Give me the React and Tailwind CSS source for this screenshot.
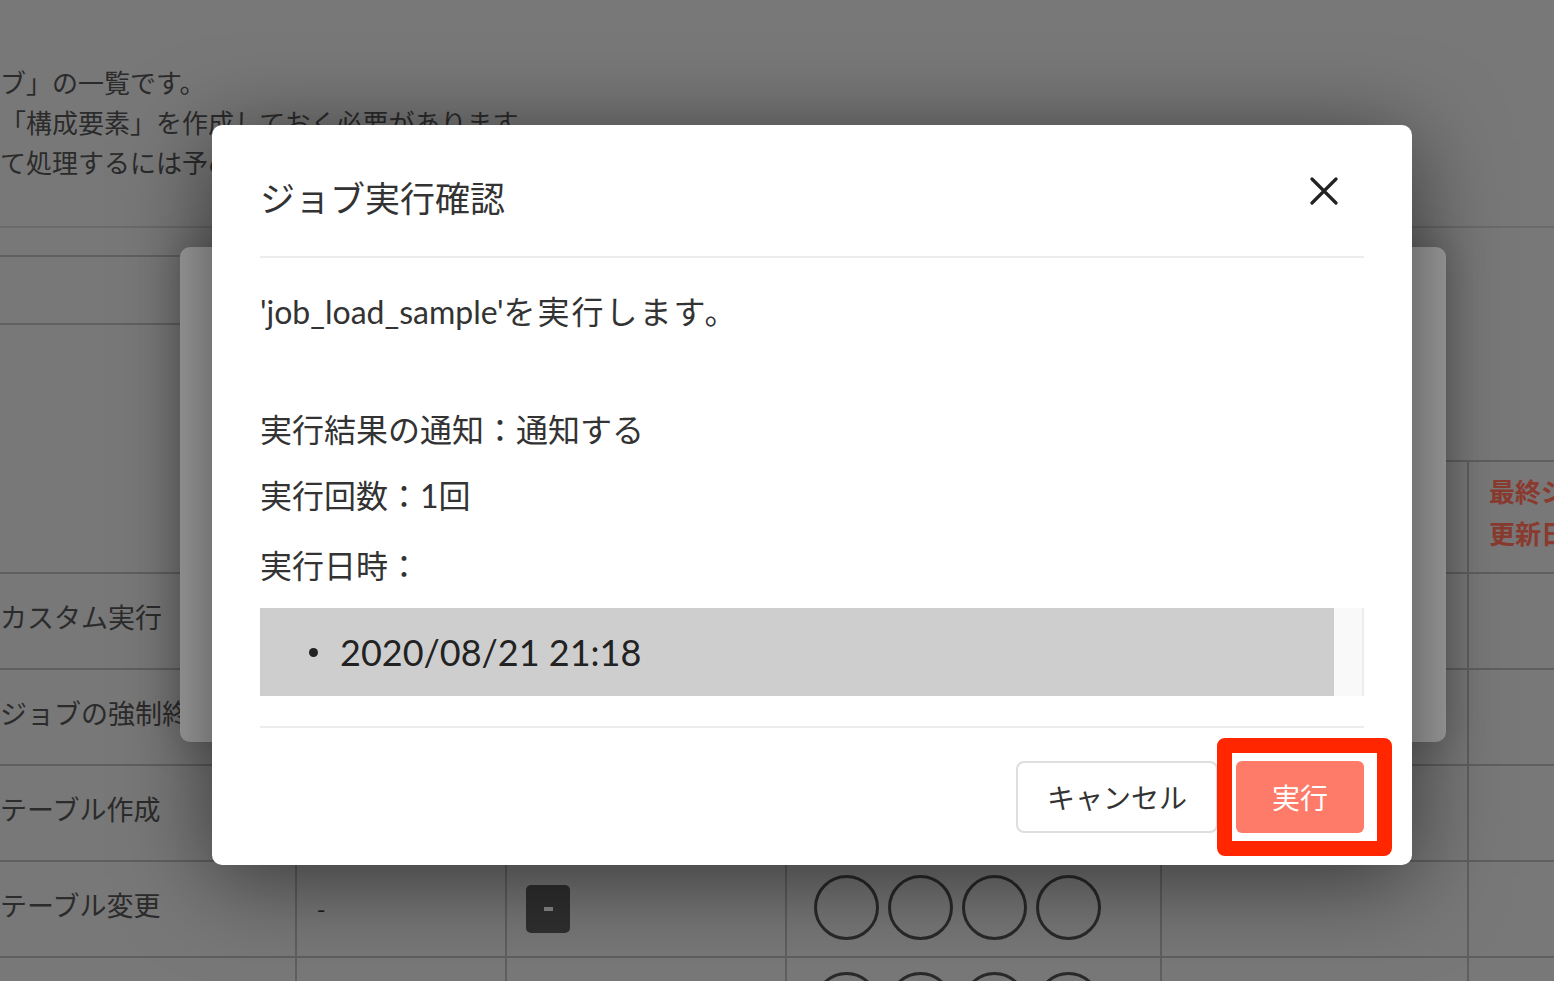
import React from "react";

const jp = { fontFamily: "'Noto Sans CJK JP', sans-serif" };
const mix = { fontFamily: "Lato, 'Noto Sans CJK JP', sans-serif" };

function Circles() {
  return (
    <div className="flex gap-[9px]">
      {[0, 1, 2, 3].map((i) => (
        <div key={i} className="w-[65px] h-[65px] rounded-full border-[3px] border-[#2a2a2a]" />
      ))}
    </div>
  );
}

function Row({ label, children, last }) {
  return (
    <div className="grid grid-cols-[295px_210px_280px_375px_307px_1fr] h-[96px] border-t-2 border-[#5f5f5f]">
      <div className="flex items-center pb-[7px] text-[27px] text-[#2b2b2b] whitespace-nowrap overflow-hidden">{label}</div>
      <div className="border-l-2 border-[#5f5f5f] flex items-center pl-[20px] pb-[3px]">{children && children[0]}</div>
      <div className="border-l-2 border-[#5f5f5f] flex items-center pl-[19px]">{children && children[1]}</div>
      <div className={"border-l-2 border-[#5f5f5f] flex pl-[27px] " + (last ? "items-start pt-[14px]" : "items-center pb-[3px]")}>
        {children && children[2]}
      </div>
      <div className="border-l-2 border-[#5f5f5f]" />
      <div className="border-l-2 border-[#5f5f5f]" />
    </div>
  );
}

export default function App() {
  return (
    <div className="relative w-[1554px] h-[981px] overflow-hidden bg-[#787878]" style={jp}>
      {/* page behind */}
      <div className="h-[226px] pt-[62px] text-[26px] leading-[40px] text-[#2b2b2b] whitespace-nowrap">
        <p>ブ」の一覧です。</p>
        <p>「構成要素」を作成しておく必要があります。</p>
        <p>て処理するには予め設定をしてください。</p>
      </div>
      <div className="h-[29px] border-t-2 border-[#6a6a6a]" />
      <div className="h-[68px] w-[400px] border-t-2 border-[#606060]" />
      <div className="h-[137px] w-[400px] border-t-2 border-[#606060]" />
      <div className="grid grid-cols-[295px_210px_280px_375px_307px_1fr] h-[112px]">
        <div />
        <div className="border-t-2 border-l-2 border-[#5f5f5f]" />
        <div className="border-t-2 border-l-2 border-[#5f5f5f]" />
        <div className="border-t-2 border-l-2 border-[#5f5f5f]" />
        <div className="border-t-2 border-l-2 border-[#5f5f5f]" />
        <div className="border-t-2 border-l-2 border-[#5f5f5f] flex flex-col justify-center pl-[20px] pb-[10px] text-[26px] leading-[42px] font-bold text-[#8a3a2f] whitespace-nowrap">
          <span>最終ジョブ</span>
          <span>更新日時</span>
        </div>
      </div>
      <Row label="カスタム実行" />
      <Row label="ジョブの強制終了" />
      <Row label="テーブル作成" />
      <Row label="テーブル変更">
        {[
          <span key="a" className="text-[24px] text-[#1e1e1e]">-</span>,
          <div key="b" className="w-[44px] h-[48px] rounded-[5px] bg-[#303030] flex items-center justify-center">
            <div className="w-[9px] h-[4px] bg-[#888]" />
          </div>,
          <Circles key="c" />,
        ]}
      </Row>
      <Row label="" last>
        {[null, null, <Circles key="c" />]}
      </Row>

      {/* previous dialog */}
      <div className="absolute left-[180px] top-[247px] w-[1266px] h-[495px] rounded-[10px] bg-[#a1a1a1] shadow-[0_0_40px_rgba(0,0,0,0.25)]" />

      {/* confirm dialog */}
      <div className="absolute left-[212px] top-[125px] w-[1200px] h-[740px] rounded-[10px] bg-white px-[48px] shadow-[0_14px_90px_rgba(0,0,0,0.55)] text-[#333]">
        <div className="flex justify-between items-start h-[133px] border-b-2 border-[#ececec]">
          <h2 className="mt-[49px] text-[35px] leading-[46px] text-[#333]">ジョブ実行確認</h2>
          <button className="mt-[52px] mr-[26px]">
            <svg width="28" height="28" viewBox="0 0 28 28">
              <path d="M2 2 L26 26 M26 2 L2 26" stroke="#222" strokeWidth="3.2" strokeLinecap="round" />
            </svg>
          </button>
        </div>
        <div className="pt-[30px] text-[32px] leading-[48px]">
          <p style={mix}>
            'job_load_sample'<span className="tracking-[2px]">を実行します。</span>
          </p>
          <div className="h-[68px]" />
          <p className="mb-[20px]">実行結果の通知：通知する</p>
          <p className="mb-[20px]" style={mix}>実行回数：1回</p>
          <p className="mb-[20px]">実行日時：</p>
          <div className="flex h-[88px]">
            <div className="flex-1 bg-[#cecece] flex items-center">
              <span className="ml-[49px] w-[9px] h-[9px] rounded-full bg-[#222]" />
              <span className="ml-[22px] text-[36px] text-[#222]" style={mix}>2020/08/21 21:18</span>
            </div>
            <div className="w-[30px] bg-[#f9f9f9] border-r-2 border-[#ededed]" />
          </div>
        </div>
        <div className="mt-[30px] border-t-2 border-[#ececec] flex justify-end gap-[18px] pt-[33px]">
          <button className="w-[202px] h-[72px] rounded-[8px] border-2 border-[#dedede] bg-white text-[28px] text-[#333]">
            キャンセル
          </button>
          <button className="w-[128px] h-[72px] rounded-[6px] bg-[#fd7b68] text-[28px] text-white">実行</button>
        </div>
        {/* highlight annotation */}
        <div className="absolute left-[1005px] top-[613px] w-[175px] h-[118px] rounded-[8px] border-[15px] border-[#ff2600]" />
      </div>
    </div>
  );
}
